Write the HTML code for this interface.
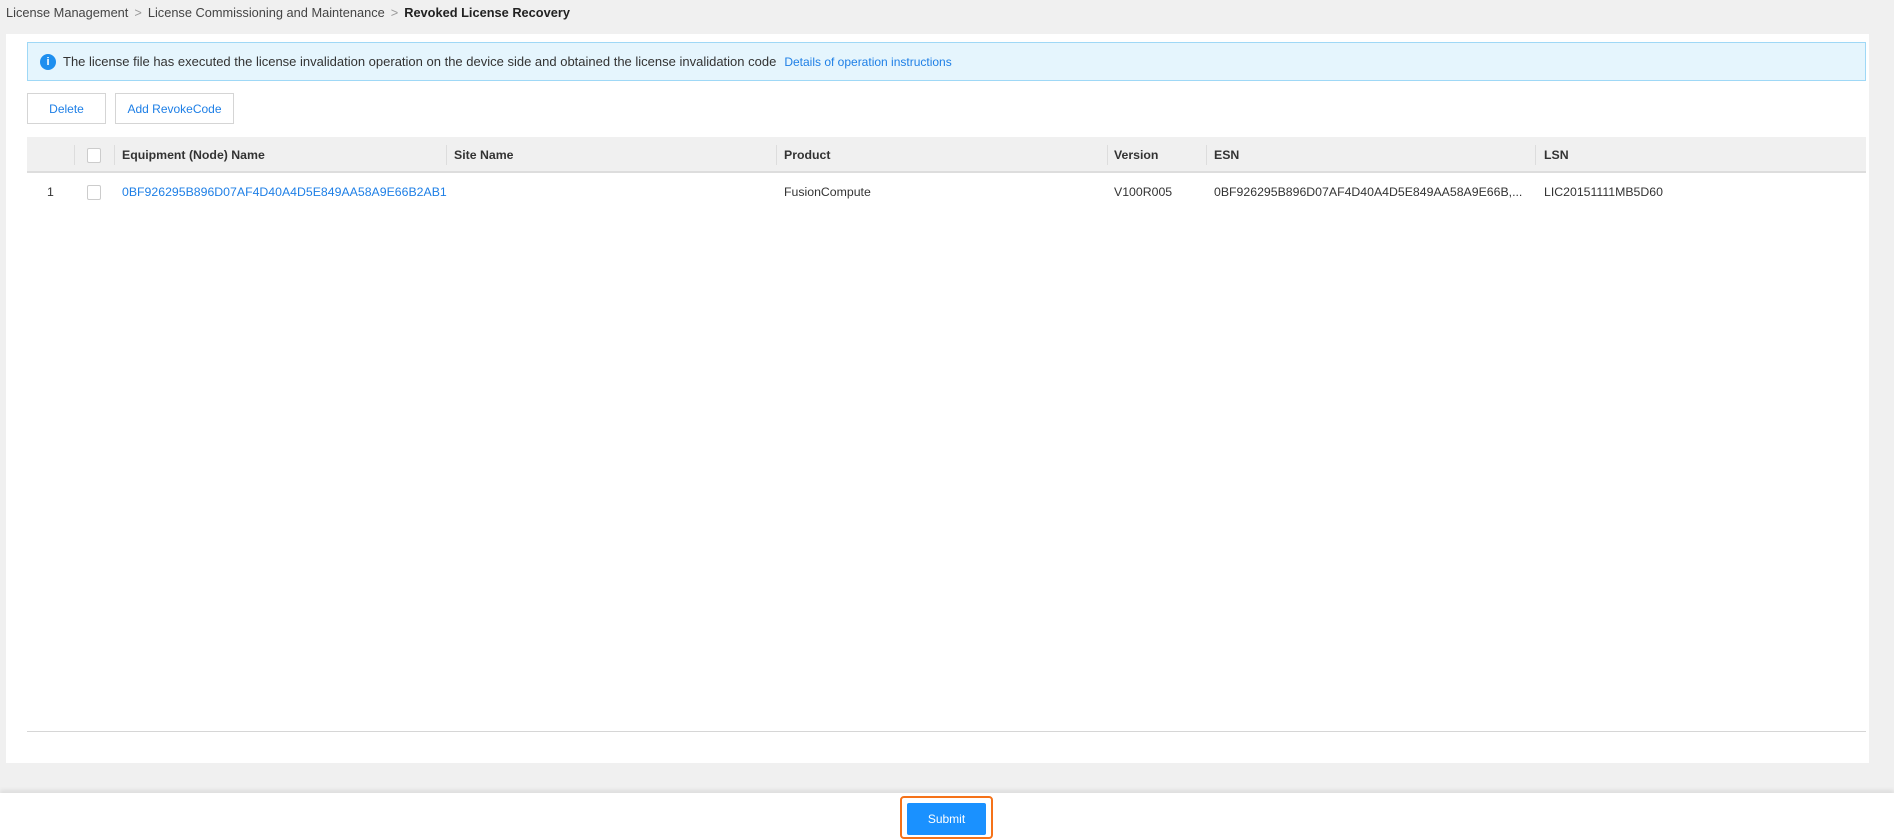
<!DOCTYPE html>
<html><head><meta charset="utf-8"><style>
*{box-sizing:border-box;margin:0;padding:0}
body{width:1894px;height:839px;background:#f0f0f0;font-family:"Liberation Sans",sans-serif;font-size:13px;color:#333;position:relative;overflow:hidden}
.abs{position:absolute}
.bc{left:6px;top:4px;line-height:17px;color:#444;font-size:12.8px}
.bc .sep{color:#999;margin:0 6px}
.bc b{color:#222}
.panel{left:6px;top:34px;width:1863px;height:729px;background:#fff}
.info{left:27px;top:42px;width:1839px;height:39px;background:#e5f5fd;border:1px solid #9fd8f6;display:flex;align-items:center;padding-left:12px;font-size:13px;color:#333}
.info .ic{width:16px;height:16px;border-radius:50%;background:#1e8fef;color:#fff;font-size:11px;font-weight:bold;text-align:center;line-height:16px;margin-right:7px}
.info a{color:#1e7fe6;margin-left:8px;font-size:12px}
.btn{top:93px;height:31px;border:1px solid #d5d5d5;background:#fff;color:#1e7fe6;font-size:12px;display:flex;align-items:center;justify-content:center}
.th{left:27px;top:137px;width:1839px;height:36px;background:#f0f0f0;border-bottom:2px solid #ddd;font-size:12.3px}
.th span,.tr span{position:absolute;white-space:nowrap}
.th span{top:11px;font-weight:bold;color:#333}
.vs{position:absolute;top:8px;width:1px;height:20px;background:#ddd}
.cb{position:absolute;width:14px;height:15px;border:1px solid #ccc;background:#fff;border-radius:2px}
.tr{left:27px;top:173px;width:1839px;height:40px;font-size:12.3px}
.tr span{top:12px}
.line{left:27px;top:731px;width:1839px;height:1px;background:#d6d6d6}
.bottom{left:0;top:793px;width:1894px;height:46px;background:#fff;box-shadow:0 -3px 4px rgba(0,0,0,.08)}
.out{left:900px;top:796px;width:93px;height:43px;border:2px solid #f57219;border-radius:4px}
.sub{left:907px;top:803px;width:79px;height:32px;background:#1a91ff;border-radius:2px;color:#fff;font-size:12px;display:flex;align-items:center;justify-content:center}
</style></head><body>
<div class="abs bc">License Management<span class="sep">&gt;</span>License Commissioning and Maintenance<span class="sep">&gt;</span><b>Revoked License Recovery</b></div>
<div class="abs panel"></div>
<div class="abs info"><div class="ic">i</div>The license file has executed the license invalidation operation on the device side and obtained the license invalidation code<a>Details of operation instructions</a></div>
<div class="abs btn" style="left:27px;width:79px">Delete</div>
<div class="abs btn" style="left:115px;width:119px">Add RevokeCode</div>
<div class="abs th">
<div class="vs" style="left:47px"></div><div class="cb" style="left:60px;top:11px"></div>
<div class="vs" style="left:87px"></div><span style="left:95px">Equipment (Node) Name</span>
<div class="vs" style="left:419px"></div><span style="left:427px">Site Name</span>
<div class="vs" style="left:749px"></div><span style="left:757px">Product</span>
<div class="vs" style="left:1080px"></div><span style="left:1087px">Version</span>
<div class="vs" style="left:1179px"></div><span style="left:1187px">ESN</span>
<div class="vs" style="left:1508px"></div><span style="left:1517px">LSN</span>
</div>
<div class="abs tr">
<span style="left:20px">1</span><div class="cb" style="left:60px;top:12px"></div>
<span style="left:95px;color:#1e7fe6">0BF926295B896D07AF4D40A4D5E849AA58A9E66B2AB1</span>
<span style="left:757px">FusionCompute</span>
<span style="left:1087px">V100R005</span>
<span style="left:1187px">0BF926295B896D07AF4D40A4D5E849AA58A9E66B,...</span>
<span style="left:1517px">LIC20151111MB5D60</span>
</div>
<div class="abs line"></div>
<div class="abs bottom"></div>
<div class="abs out"></div>
<div class="abs sub">Submit</div>
</body></html>
